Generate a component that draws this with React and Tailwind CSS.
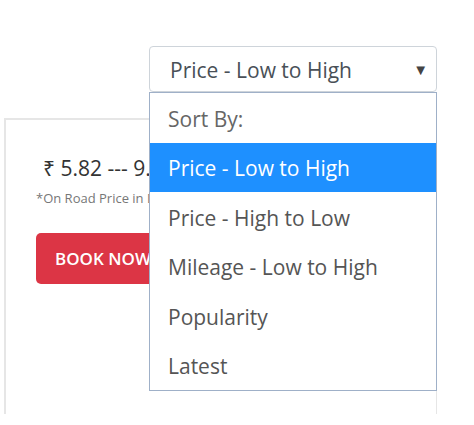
const OPTIONS = ['Price - Low to High', 'Price - High to Low', 'Mileage - Low to High', 'Popularity', 'Latest']

function SortSelect() {
  return (
    <div className="w-[288px] h-[46px] border border-[#ced4da] rounded-[4px] bg-white flex items-center justify-between pl-[20px] pr-[8px]">
      <span className="pt-[3px] text-[21px] text-[#495057]">Price - Low to High</span>
      <span className="pt-[1px] text-[15px] text-[#444]">▼</span>
    </div>
  )
}

function SortMenu() {
  return (
    <div className="absolute top-[92px] left-[149px] w-[288px] border border-[#9fb0c8] bg-white">
      <div className="h-[49.5px] flex items-center pl-[18px] pt-[3px] text-[21px] text-[#666]">Sort By:</div>
      {OPTIONS.map((o, i) => (
        <div
          key={o}
          className={
            i === 0
              ? 'h-[49.5px] flex items-center pl-[18px] pt-[3px] text-[21px] bg-[#1e90ff] text-white'
              : 'h-[49.5px] flex items-center pl-[18px] pt-[3px] text-[21px] text-[#555]'
          }
        >
          {o}
        </div>
      ))}
    </div>
  )
}

export default function App() {
  return (
    <div className="relative w-[474px] h-[425px] overflow-hidden bg-white font-['Open_Sans',sans-serif]">
      <div className="pt-[46px] pl-[149px]">
        <SortSelect />
      </div>
      <div className="ml-[4px] mt-[26px] w-[433px] h-[296px] border-l-2 border-t-2 border-r border-[#e6e6e6] pl-[30px] pt-[34px]">
        <div className="pl-[7px] text-[21px] font-medium text-[#333] leading-[28px]">₹ 5.82 --- 9.15 Lakh</div>
        <div className="mt-[7px] text-[13px] text-[#777] leading-[18px]">*On Road Price in Delhi</div>
        <button className="mt-[26px] h-[51px] w-[160px] rounded-[5px] bg-[#dc3545] text-white text-[17px] font-semibold text-left pl-[19px]">
          BOOK NOW
        </button>
      </div>
      <SortMenu />
    </div>
  )
}
